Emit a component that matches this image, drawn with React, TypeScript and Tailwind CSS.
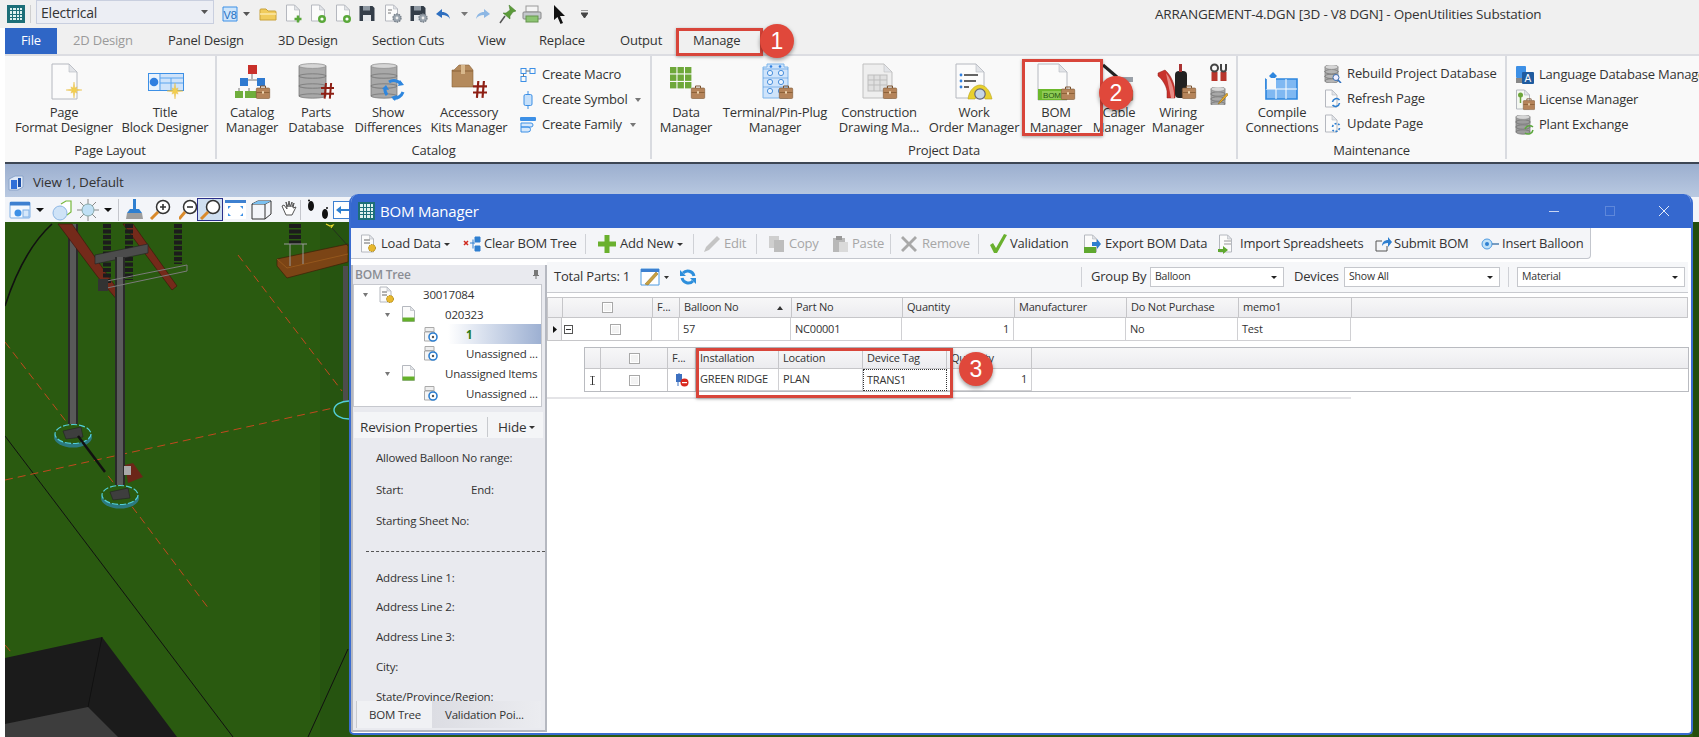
import React from "react";

const S = ({ w = 18, h = 18, vb, children, className = "" }: { w?: number; h?: number; vb?: string; children?: React.ReactNode; className?: string }) => (
  <svg width={w} height={h} viewBox={vb ?? `0 0 ${w} ${h}`} className={`shrink-0 block ${className}`}>{children}</svg>
);

const Case = ({ x, y, w = 14 }: { x: number; y: number; w?: number }) => (
  <g transform={`translate(${x} ${y}) scale(${w / 14})`}>
    <path d="M4.5 3V1h5v2" fill="none" stroke="#7a5230" strokeWidth="1" />
    <rect x="0.3" y="3" width="13.4" height="10.5" rx="1" fill="#b5845a" stroke="#7d5732" strokeWidth=".6" />
    <rect x="0.5" y="7" width="13" height="1" fill="#8d6239" />
    <rect x="6" y="6.2" width="2" height="2.4" fill="#ecd3ae" />
  </g>
);
const Star = ({ cx, cy, r = 8 }: { cx: number; cy: number; r?: number }) => {
  const pts: string[] = [];
  for (let i = 0; i < 16; i++) {
    const a = (i * Math.PI) / 8;
    const rr = i % 4 === 0 ? r : i % 2 === 0 ? r * 0.55 : r * 0.28;
    pts.push(`${cx + rr * Math.cos(a)},${cy + rr * Math.sin(a)}`);
  }
  return <polygon points={pts.join(" ")} fill="#f3cf4e" stroke="#e6b93a" strokeWidth=".4" />;
};
const DocP = ({ x, y, w, h, f = 8, fill = "#fbfbfb", stroke = "#b5b8bf" }: { x: number; y: number; w: number; h: number; f?: number; fill?: string; stroke?: string }) => (
  <g>
    <path d={`M${x} ${y}h${w - f}l${f} ${f}V${y + h}H${x}z`} fill={fill} stroke={stroke} />
    <path d={`M${x + w - f} ${y}v${f}h${f}z`} fill="#e2e4e8" stroke={stroke} strokeWidth=".6" />
  </g>
);
const Hash = ({ x, y, s = 14, c = "#8e1f14" }: { x: number; y: number; s?: number; c?: string }) => (
  <g stroke={c} strokeWidth={s / 6.5} fill="none">
    <path d={`M${x + s * 0.38} ${y}L${x + s * 0.28} ${y + s * 1.2}M${x + s * 0.78} ${y}L${x + s * 0.68} ${y + s * 1.2}M${x} ${y + s * 0.38}H${x + s}M${x} ${y + s * 0.82}H${x + s}`} />
  </g>
);
const Db = ({ x, y, w, h, fill = "#a8a8a8" }: { x: number; y: number; w: number; h: number; fill?: string }) => {
  const sh = h / 3;
  return (
    <g>
      {[2, 1, 0].map((i) => (
        <g key={i}>
          <rect x={x} y={y + i * sh + 2} width={w} height={sh} fill={fill} stroke="#6f6f6f" strokeWidth=".7" />
          <ellipse cx={x + w / 2} cy={y + i * sh + sh + 2} rx={w / 2} ry={2.2} fill={fill} stroke="#6f6f6f" strokeWidth=".7" />
          <ellipse cx={x + w / 2} cy={y + i * sh + 2} rx={w / 2} ry={2.4} fill="#d6d6d6" stroke="#8a8a8a" strokeWidth=".7" />
        </g>
      ))}
    </g>
  );
};
const Big = ({ children }: { children: React.ReactNode }) => <S w={44} h={40}>{children}</S>;

const IPage = () => <Big><DocP x={10} y={1} w={25} h={35} /><Star cx={32} cy={27} /></Big>;
const ITitle = () => (
  <Big>
    <rect x="5.5" y="10.5" width="35" height="17" fill="#cfe3fa" stroke="#3d90e6" />
    <rect x="6" y="11" width="10" height="16" fill="#eaf3fd" />
    <circle cx="11" cy="19" r="4.3" fill="#2f7fe0" />
    <path d="M17 11v16M17 15h23M17 20h23M28 15v12" stroke="#5aa4ee" fill="none" />
    <Star cx={32} cy={28} />
  </Big>
);
const ICatalog = () => (
  <Big>
    <path d="M22 11v5M14 19v-2h17v2M9 25v3M19 25v3" stroke="#777" fill="none" />
    <rect x="18" y="2" width="9" height="9" fill="#c9302a" />
    <rect x="10" y="15" width="8" height="8" fill="#2f7ad0" />
    <rect x="27" y="15" width="8" height="8" fill="#2f7ad0" />
    <rect x="5" y="28" width="8" height="7" fill="#6fae3c" />
    <rect x="15" y="28" width="8" height="7" fill="#6fae3c" />
    <rect x="23" y="28" width="4" height="7" fill="#6fae3c" />
    <Case x={26} y={22} />
  </Big>
);
const IParts = () => <Big><Db x={5} y={1} w={27} h={30} /><Hash x={27} y={20} s={13} /></Big>;
const IDiff = () => (
  <Big>
    <Db x={5} y={1} w={26} h={30} />
    <path d="M23 19a9 9 0 0 1 12 2M37 29a9 9 0 0 1-10 6M21 32a9 9 0 0 1-2-7" stroke="#2e86de" strokeWidth="3" fill="none" />
    <path d="M34 17l4 5-6 1zM29 38l-4-4 6-2zM16 26l4-4 3 5z" fill="#2e86de" />
  </Big>
);
const IAccessory = () => (
  <Big>
    <path d="M7 7l5-5h10l4 5v17H5V7z" fill="#b48a5c" stroke="#8a6238" strokeWidth=".6" />
    <path d="M5 8h21" stroke="#8a6238" />
    <rect x="14" y="2" width="4" height="9" fill="#d8b88c" />
    <Hash x={26} y={18} s={14} />
  </Big>
);
const IData = () => (
  <Big>
    {[0, 1, 2].map((r) => [0, 1, 2].map((c) => <rect key={`${r}${c}`} x={6 + c * 7.5} y={4 + r * 7.5} width={6.4} height={6.4} fill="#6ea83a" />))}
    <Case x={27} y={22} />
  </Big>
);
const ITerminal = () => (
  <Big>
    <path d="M10 4h4V1h17v3h4v31H10z" fill="#cfe4fb" stroke="#7db4ea" />
    <circle cx="18" cy="3.5" r="1.3" fill="#2f7fe0" /><circle cx="27" cy="3.5" r="1.3" fill="#2f7fe0" />
    {[10, 19, 28].map((y) => (
      <g key={y} stroke="#4a90dc" fill="#eaf3fd"><path d={`M10 ${y - 4}H35`} strokeWidth=".6" /><circle cx="17" cy={y} r="2.6" /><circle cx="28" cy={y} r="2.6" /></g>
    ))}
    <Case x={26} y={22} />
  </Big>
);
const IConstruction = () => (
  <Big>
    <DocP x={6} y={1} w={29} h={34} fill="#eeeeee" stroke="#bfbfbf" />
    <rect x="11" y="12" width="19" height="16" fill="#e0e0e0" stroke="#bdbdbd" />
    <path d="M11 17h19M11 22h19M17 12v16M23 12v16" stroke="#bdbdbd" />
    <Case x={26} y={22} />
  </Big>
);
const IWork = () => (
  <Big>
    <DocP x={4} y={1} w={28} h={34} />
    <g fill="#2f7fe0"><circle cx="9" cy="12" r="1.4" /><circle cx="9" cy="18" r="1.4" /><circle cx="9" cy="24" r="1.4" /></g>
    <path d="M12 12h14M12 18h12M12 24h5" stroke="#333" strokeWidth="1.4" />
    <path d="M16 36c1-9 7-14 12-14s10 5 12 14h-7c-1-3-3-5-5-5s-4 2-5 5z" fill="#e8d02e" stroke="#b8a41c" strokeWidth=".6" />
    <circle cx="28" cy="31" r="5.2" fill="#c6d6e6" stroke="#667" strokeWidth="1.2" />
  </Big>
);
const IBom = () => (
  <Big>
    <DocP x={4} y={1} w={29} h={36} />
    <rect x="4" y="26" width="29" height="11" fill="#6cb82c" />
    <rect x="8" y="28" width="20" height="8" fill="#8ecb55" />
    <text x="9" y="35" fontSize="8" fill="#27560f" fontFamily="Liberation Sans, sans-serif">BOM</text>
    <Case x={27} y={23} />
  </Big>
);
const ICable = () => (
  <Big>
    <path d="M6 2l14 12" stroke="#222" strokeWidth="3" />
    <rect x="18" y="14" width="18" height="5" fill="#9aa0a8" />
    <Case x={22} y={24} />
  </Big>
);
const IWiring = () => (
  <Big>
    <path d="M2 10l7-3c5 4 9 12 10 20v8h-8V28C10 22 6 16 2 13z" fill="#c8322c" stroke="#8f1f1a" strokeWidth=".5" />
    <path d="M10 10c4 5 7 12 8 20v5h-3" fill="#e88a84" />
    <rect x="19" y="8" width="12" height="27" rx="4" fill="#222" />
    <rect x="23" y="1" width="3" height="8" fill="#a33" />
    <Case x={26} y={22} />
  </Big>
);
const ICompile = () => (
  <Big>
    <polygon points="13,9 17,13 13,17 9,13" fill="#2e86de" />
    <path d="M6 16h31v20H6z" fill="#7fb8f2" stroke="#2e86de" strokeWidth="1.6" />
    <path d="M16 26v10M26 16v20M6 26h31" stroke="#fff" strokeWidth="1" />
    <rect x="6" y="15" width="10" height="11" fill="#f9f9f9" />
    <path d="M6 26V16" stroke="#2e86de" strokeWidth="1.6" />
  </Big>
);

/* small ribbon icons */
const IMacro = () => (
  <S w={18} h={18}><rect x="2" y="2.5" width="5" height="5" fill="none" stroke="#3d90e6" /><rect x="11" y="2.5" width="5" height="5" fill="none" stroke="#3d90e6" /><rect x="2" y="10.5" width="5" height="5" fill="none" stroke="#3d90e6" /><path d="M7 5h4M4.5 8v2.5" stroke="#777" /></S>
);
const ISymbol = () => (
  <S w={18} h={18}><rect x="5" y="3.5" width="8" height="11" rx="1.5" fill="#c6e0fa" stroke="#3d90e6" /><path d="M9 0v3.5M9 14.5V18" stroke="#3d90e6" /></S>
);
const IFamily = () => (
  <S w={18} h={18}><rect x="1" y="1" width="16" height="4" rx="1" fill="#3d90e6" /><path d="M2 7h10a2 2 0 0 1 0 4H2M2 11h7a2 2 0 0 1 0 5H2M2 7v9" fill="#d6e8fb" stroke="#3d90e6" /></S>
);
const IRebuild = () => (
  <S w={18} h={18}><Db x={1} y={0} w={13} h={14} fill="#b5b5b5" /><circle cx="12" cy="12.5" r="3" fill="#eef" stroke="#3d6fb0" /><path d="M14 15l3 3" stroke="#2e6fc0" strokeWidth="1.6" /></S>
);
const IRefresh = ({ dashed = false }: { dashed?: boolean }) => (
  <S w={18} h={20} vb="0 0 18 20"><DocP x={1.5} y={1} w={11.5} h={17} f={5} />
    <path d="M8.5 13a4 4 0 0 1 7-2M15.5 14a4 4 0 0 1-7 2" stroke="#2e7fd0" strokeWidth="1.6" fill="none" strokeDasharray={dashed ? "2 1.5" : undefined} /></S>
);
const ILang = () => (
  <S w={20} h={20}><rect x="1" y="1" width="10" height="12" rx="1" fill="#3d90e6" /><rect x="7" y="7" width="12" height="12" rx="1" fill="#1f5b9f" /><text x="9.5" y="17" fontSize="10" fill="#fff" fontFamily="Liberation Sans, sans-serif">A</text><rect x="1" y="13" width="6" height="5" fill="#888" /></S>
);
const ILicense = () => (
  <S w={20} h={22} vb="0 0 20 22"><DocP x={1.5} y={1} w={13} h={19} f={5} fill="#f4f7f2" /><circle cx="5.5" cy="6" r="2.5" fill="#6da53a" /><path d="M5.5 8v6" stroke="#6da53a" strokeWidth="1.5" /><Case x={8} y={9} w={12} /></S>
);
const IPlant = () => (
  <S w={20} h={20}><Db x={1} y={0} w={14} h={15} fill="#9d9d9d" /><path d="M10 14a5 5 0 0 1 8-2M18 15a5 5 0 0 1-8 3" stroke="#5aa83a" strokeWidth="1.5" fill="none" /></S>
);

/* qat */
const Tri = ({ c = "#444", w = 7, h = 4 }: { c?: string; w?: number; h?: number }) => <S w={w} h={h}><path d={`M0 0H${w}L${w / 2} ${h}z`} fill={c} /></S>;
const QDocPlus = ({ c, plain }: { c: string; plain?: boolean }) => (
  <S w={18} h={20} vb="0 0 18 20"><DocP x={1.5} y={1} w={13} h={16} f={5} />
    {plain ? <path d="M9.5 15h7M13 11.5v7" stroke={c} strokeWidth="2.5" /> : <g><circle cx="12" cy="15" r="4" fill={c} /><circle cx="12" cy="15" r="1.6" fill="#fff" /></g>}
  </S>
);
const QSave = ({ gear, paper }: { gear?: boolean; paper?: boolean }) => (
  <S w={20} h={20}>
    {paper ? <DocP x={2.5} y={1} w={12} h={16} f={4} /> : <g><path d="M1.5 2h13l2 2v13h-15z" fill="#333d48" /><rect x="5" y="2" width="7" height="4.5" fill="#8f99a3" /><rect x="5" y="11" width="8" height="6" fill="#e4e7ea" /></g>}
    {gear && <g><circle cx="14" cy="14" r="4" fill="#9aa4ae" stroke="#767f88" strokeDasharray="1.5 1" strokeWidth="1.4" /><circle cx="14" cy="14" r="1.4" fill="#eee" /></g>}
    {paper && <path d="M5 6h4M5 9h3" stroke="#777" />}
  </S>
);
const QAT = [
  [16, <S w={16} h={16}><path d="M1 1h14v14H1z" fill="#cfe6fb" stroke="#3d90e6" /><text x="1.5" y="13" fontSize="11" fill="#1f6fc0" fontFamily="Liberation Sans, sans-serif">V8</text></S>],
  [16, <Tri c="#555" />],
  [28, <S w={18} h={14}><path d="M1 3a1 1 0 0 1 1-1h5l2 2h7a1 1 0 0 1 1 1v8H1z" fill="#f1cc5c" stroke="#c9a23a" /><path d="M1 7h16" stroke="#fbe8a8" strokeWidth="1.5" /></S>],
  [23, <QDocPlus c="#5aa83a" plain />],
  [28, <QDocPlus c="#5aa83a" />],
  [22, <QDocPlus c="#5aa83a" />],
  [25, <QSave />],
  [26, <QSave gear paper />],
  [25, <QSave gear />],
  [24, <S w={14} h={12}><path d="M0 6l6-5v3c4 0 7 2 8 7-2-3-4-4-8-4v3z" fill="#2e6fc0" /></S>],
  [18, <Tri c="#777" />],
  [20, <S w={14} h={12}><path d="M14 6L8 1v3C4 4 1 6 0 11c2-3 4-4 8-4v3z" fill="#8db7e4" /></S>],
  [29, <S w={18} h={20} vb="0 0 18 20"><path d="M10 1l7 6-3 1-3 4 0 3-7-6 3 0 4-3z" fill="#5c9b3a" stroke="#3f7a26" strokeWidth=".5" /><path d="M6 12l-5 7" stroke="#555" strokeWidth="1.5" /></S>],
  [20, <S w={20} h={18}><rect x="4" y="1" width="12" height="6" fill="#f5f5f5" stroke="#999" /><rect x="1" y="7" width="18" height="7" rx="1" fill="#c4c8cc" stroke="#888" /><rect x="4" y="11" width="12" height="6" fill="#8cc472" stroke="#66944f" /></S>],
  [34, <S w={14} h={20} vb="0 0 14 20"><path d="M2 1l11 11H8l3 7-2.5 1-3-7L2 16z" fill="#111" /></S>],
  [16, <S w={7} h={9}><path d="M0 0h7M0 3h7L3.5 8z" stroke="#444" fill="#444" /></S>],
] as const;

const tabs: [string, string, string?][] = [
  ["2D Design", "ml-[16px] w-[95px]", "text-[#9a9a9a]"],
  ["Panel Design", "w-[110px]"],
  ["3D Design", "w-[94px]"],
  ["Section Cuts", "w-[106px]"],
  ["View", "w-[61px]"],
  ["Replace", "w-[81px]"],
  ["Output", "w-[73px]"],
  ["Manage", ""],
];

const Btn = ({ w, icon, l1, l2 }: { w: number; icon: React.ReactNode; l1: string; l2: string }) => (
  <div className="flex flex-col items-center shrink-0" style={{ width: w }}>
    <div className="h-[40px] flex justify-center">{icon}</div>
    <div className="mt-[2px] text-center leading-[14.5px] whitespace-nowrap flex flex-col items-center">
      <span>{l1}</span>
      <span>{l2}</span>
    </div>
  </div>
);
const LI = ({ icon, t, arrow }: { icon: React.ReactNode; t: string; arrow?: boolean }) => (
  <div className="h-[25px] flex items-center gap-[4px] whitespace-nowrap">
    <div className="w-[20px] flex justify-center shrink-0">{icon}</div>
    <span>{t}</span>
    {arrow && <span className="ml-[4px]"><Tri c="#777" w={6} h={4} /></span>}
  </div>
);
const Group = ({ w, label, children, last }: { w: number; label?: string; children: React.ReactNode; last?: boolean }) => (
  <div className={`shrink-0 flex flex-col h-[103px] ${last ? "" : "border-r-2 border-[#d9dbe0]"}`} style={{ width: w }}>
    <div className="flex h-[88px] pt-[7px]">{children}</div>
    {label && <div className="h-[16px] flex items-center justify-center">{label}</div>}
  </div>
);

/* small toolbar icons in BOM window */
const TDoc = ({ kind }: { kind: string }) => (
  <S w={18} h={20} vb="0 0 18 20">
    <DocP x={1.5} y={1} w={12} h={17} f={4} />
    {kind === "load" && <g><path d="M4 6h6M4 9h6" stroke="#666" /><circle cx="12" cy="14" r="3.5" fill="#e8b82e" stroke="#a88414" strokeDasharray="1.5 1" /></g>}
    {kind === "export" && <g><rect x="1" y="13" width="12" height="6" fill="#5fa82f" /><path d="M9 8h5V5l4 5-4 5v-3H9z" fill="#2e7fd0" /></g>}
    {kind === "import" && <g><path d="M6 7h7M6 10h7" stroke="#999" /><path d="M0 15h5v-3l5 4-5 4v-2H0z" fill="#5fa82f" /></g>}
  </S>
);
const TI = ({ w, ml = 0, icon, t, dis, arrow, gap = 3 }: { w: number; ml?: number; icon: React.ReactNode; t: string; dis?: boolean; arrow?: boolean; gap?: number }) => (
  <div className={`flex items-center shrink-0 whitespace-nowrap ${dis ? "text-[#a6a6a6]" : ""}`} style={{ width: w, marginLeft: ml, gap }}>
    {icon}
    <span>{t}</span>
    {arrow && <span><Tri c="#333" w={6} h={3} /></span>}
  </div>
);
const Sep = () => <div className="w-px h-[20px] bg-[#cfd1d6] shrink-0" />;

const Check = () => <div className="w-[11px] h-[11px] border border-[#a8a8a8] bg-[#f3f3f3] shadow-[inset_0_0_0_1px_#fff]" />;

const HC = ({ w, t, right, sort, center }: { w?: number; t?: React.ReactNode; right?: boolean; sort?: boolean; center?: boolean }) => (
  <div className={`h-full flex items-center px-[4px] border-r border-[#c6c6c9] shrink-0 whitespace-nowrap overflow-hidden ${center ? "justify-center" : right ? "justify-end" : ""} ${w ? "" : "flex-1 border-r-0"}`} style={w ? { width: w } : undefined}>
    {t}
    {sort && <span className="ml-auto mr-[4px]"><svg width="6" height="4"><path d="M0 4L3 0l3 4z" fill="#333" /></svg></span>}
  </div>
);
const Combo = ({ w, t }: { w: number; t: string }) => (
  <div className="h-[20px] border border-[#c5c7cc] bg-white flex items-center justify-between px-[4px] text-[10.5px] shrink-0" style={{ width: w }}>
    <span>{t}</span><span className="mr-[2px]"><Tri c="#222" w={6} h={3} /></span>
  </div>
);
const TreeRow = ({ indent, icon, text, arrow, sel, gap, green }: { indent: number; icon: React.ReactNode; text: string; arrow?: boolean; sel?: boolean; gap: number; green?: boolean }) => (
  <div className="h-[19.7px] flex items-center relative whitespace-nowrap" style={{ paddingLeft: indent }}>
    {sel && <div className="absolute left-[94px] right-0 top-0 bottom-0 bg-gradient-to-r from-white to-[#9db0d2]" />}
    <div className="w-[15px] flex justify-start shrink-0">{arrow && <Tri c="#777" w={5} h={4} />}</div>
    <div className="w-[17px] flex justify-center shrink-0">{icon}</div>
    <span style={{ marginLeft: gap }} className={`relative ${green ? "text-[#2c7a18] font-bold" : ""}`}>{text}</span>
  </div>
);
const TIcDoc = () => <S w={15} h={17} vb="0 0 15 17"><DocP x={1.5} y={.5} w={12} h={15} f={4} /><path d="M1.5 11.5h12v4h-12z" fill="#64b02a" /></S>;
const TIcGear = () => <S w={16} h={17} vb="0 0 16 17"><path d="M2 1.5h9v4H2z" fill="#eee" stroke="#aaa" /><path d="M1.5 6h10v9h-10z" fill="#f5f5f5" stroke="#aaa" /><circle cx="10" cy="11" r="4" fill="#fff" stroke="#2e7fd0" strokeWidth="1.6" /><circle cx="10" cy="11" r="1.2" fill="#555" /></S>;
const TIcLoad = () => <S w={18} h={18}><DocP x={2} y={1} w={11} h={15} f={4} /><path d="M4 6h5M4 9h5" stroke="#666" /><circle cx="12" cy="13" r="3.5" fill="#e8b82e" stroke="#a88414" strokeDasharray="1.5 1" /></S>;

const Canvas = () => (
  <svg viewBox="5 222 1694 515" className="block w-full h-full" preserveAspectRatio="none">
    <rect x="5" y="222" width="1694" height="515" fill="#2a5a10" />
    <rect x="320" y="222" width="30" height="515" fill="#265410" />
    {/* dark pit */}
    <polygon points="5,658 102,637 177,737 5,737" fill="#1b1b1b" />
    <polygon points="5,724 88,707 118,737 5,737" fill="#3d3d3d" />
    <path d="M102 637L88 707" stroke="#111" strokeWidth="1" />
    {/* thin black lines */}
    <path d="M5 436L233 737M348 649L308 737" stroke="#111" strokeWidth="1" fill="none" />
    <path d="M5 306C16 272 30 244 52 224" stroke="#111" strokeWidth="1.6" fill="none" />
    {/* red dashed lines */}
    <g stroke="#c2491f" strokeWidth="1" strokeDasharray="8 5" fill="none">
      <path d="M5 342L65 420L140 517L209 609" />
      <path d="M5 480L347 405" />
      <path d="M238 255L342 391" />
      <path d="M5 645L11 652" />
    </g>
    {/* pole 1 */}
    <rect x="68" y="224" width="10" height="200" fill="#595959" />
    <rect x="68" y="224" width="2" height="200" fill="#2a2a2a" /><rect x="76" y="224" width="2" height="200" fill="#2a2a2a" />
    {/* beams */}
    <polygon points="58,224 72,224 120,293 118,301 97,276" fill="#742a1a" stroke="#3a120b" strokeWidth=".6" />
    <polygon points="123,224 133,224 177,286 172,290" fill="#742a1a" stroke="#3a120b" strokeWidth=".6" />
    {/* insulators */}
    <g stroke="#1c1c1c" strokeWidth="8" strokeDasharray="4 1.5" fill="none">
      <path d="M107 224V284" /><path d="M129 224V280" /><path d="M178 224V264" />
    </g>
    {/* cross arm */}
    <polygon points="95,255 148,244 148,253 95,264" fill="#4c4c4c" stroke="#222" strokeWidth=".6" />
    {/* pole 2 */}
    <rect x="115" y="257" width="10" height="228" fill="#5b5b5b" />
    <rect x="115" y="257" width="2" height="228" fill="#2a2a2a" /><rect x="123" y="257" width="2" height="228" fill="#2a2a2a" />
    {/* frame */}
    <path d="M102 282L187 265L187 271L102 289Z" stroke="#7b7b7b" strokeWidth="1" fill="none" />
    <path d="M98 279h10v12h-10z" fill="#333" />
    {/* rings */}
    {[[73, 434], [120, 495]].map(([cx, cy]) => (
      <g key={cx}>
        <ellipse cx={cx} cy={cy + 3} rx="19" ry="10.5" fill="#2c7a80" />
        <ellipse cx={cx} cy={cy} rx="18" ry="9.5" fill="#2a5a10" stroke="#53cfd8" strokeWidth="1.2" strokeDasharray="6 2" />
        <polygon points={`${cx - 10},${cy - 3} ${cx + 8},${cy - 7} ${cx + 10},${cy + 3} ${cx - 7},${cy + 5}`} fill="#3e3e3e" stroke="#222" strokeWidth=".6" />
      </g>
    ))}
    {/* plate near pole 2 */}
    <polygon points="125,465 133,463 143,477 128,483" fill="#6b2618" />
    <rect x="124" y="466" width="7" height="9" fill="#a9a9a9" />
    <path d="M78 436L105 472" stroke="#111" strokeWidth="2.5" />
    {/* right beam */}
    <polygon points="277,259 348,244 348,262 287,278 277,266" fill="#7b4415" stroke="#3c1f08" strokeWidth=".7" />
    <path d="M277 259L287 268L348 254" stroke="#a0601f" fill="none" strokeWidth=".7" />
    <path d="M295 224V246" stroke="#1c1c1c" strokeWidth="12" strokeDasharray="4 1.5" />
    <path d="M284 244h23M290 244v22M303 244v20" stroke="#9a9a9a" strokeWidth="1" fill="none" />
    <path d="M326 224l4 2 3-1-2 3" stroke="#e8d92e" strokeWidth="1.2" fill="none" />
    <path d="M332 228L348 246" stroke="#222" strokeWidth=".7" />
    {/* pole 3 */}
    <rect x="343" y="266" width="5" height="142" fill="#4d4d4d" />
    <ellipse cx="349" cy="410" rx="15" ry="9" fill="#2a5a10" stroke="#53cfd8" strokeWidth="1.4" />
    {/* green right strip */}
    <rect x="1693" y="222" width="6" height="515" fill="#234e0d" />
  </svg>
);

export default function App() {
  const mainCols = [15, 90, 27, 112, 111, 112, 112, 112, 113];
  return (
    <div className="w-[1699px] h-[737px] relative overflow-hidden bg-white text-[13px] text-[#333] tracking-[-0.2px] font-['Open_Sans',sans-serif] flex flex-col">
      {/* Quick access row */}
      <div className="h-[28px] shrink-0 bg-[#f0f0f0] flex items-center">
        <div className="ml-[7px] w-[18px] h-[18px] bg-[#1d6f78] grid grid-cols-4 gap-px p-[3px] shrink-0">
          {Array.from({ length: 16 }).map((_, i) => <div key={i} className="bg-[#dff2f0]" />)}
        </div>
        <div className="ml-[5px] w-px h-[18px] bg-[#cfcfcf]" />
        <div className="ml-[5px] w-[178px] h-[24px] self-start bg-[#eceef4] border border-[#c9cfdf] flex items-center justify-between pl-[4px] pr-[5px] text-[14px] shrink-0">
          <span>Electrical</span><Tri c="#555" />
        </div>
        <div className="ml-[8px] flex items-center">
          {QAT.map(([w, el], i) => <div key={i} className="flex justify-center items-center shrink-0" style={{ width: w as number }}>{el}</div>)}
        </div>
        <div className="ml-[563px] whitespace-nowrap text-[13.5px]">ARRANGEMENT-4.DGN [3D - V8 DGN] - OpenUtilities Substation</div>
      </div>

      <div className="flex-1 pl-[5px] flex flex-col min-h-0">
        {/* Tabs */}
        <div className="h-[28px] shrink-0 flex items-stretch bg-[#f0f0f0] border-b-2 border-[#dcdde2]">
          <div className="w-[52px] bg-[#2f66c6] text-white flex items-center justify-center">File</div>
          {tabs.map(([t, c, k]) => <div key={t} className={`flex items-center shrink-0 ${c} ${k ?? ""}`}>{t}</div>)}
        </div>

        {/* Ribbon */}
        <div className="h-[108px] shrink-0 bg-[#f9f9f9] flex border-b-2 border-[#3d4654]">
          <Group w={212} label="Page Layout">
            <Btn w={118} icon={<IPage />} l1="Page" l2="Format Designer" />
            <Btn w={84} icon={<ITitle />} l1="Title" l2="Block Designer" />
          </Group>
          <Group w={435} label="Catalog">
            <Btn w={70} icon={<ICatalog />} l1="Catalog" l2="Manager" />
            <Btn w={58} icon={<IParts />} l1="Parts" l2="Database" />
            <Btn w={86} icon={<IDiff />} l1="Show" l2="Differences" />
            <Btn w={76} icon={<IAccessory />} l1="Accessory" l2="Kits Manager" />
            <div className="ml-[11px] -mt-[1px]">
              <LI icon={<IMacro />} t="Create Macro" />
              <LI icon={<ISymbol />} t="Create Symbol" arrow />
              <LI icon={<IFamily />} t="Create Family" arrow />
            </div>
          </Group>
          <Group w={586} label="Project Data">
            <Btn w={68} icon={<IData />} l1="Data" l2="Manager" />
            <Btn w={110} icon={<ITerminal />} l1="Terminal/Pin-Plug" l2="Manager" />
            <Btn w={98} icon={<IConstruction />} l1="Construction" l2="Drawing Ma..." />
            <Btn w={92} icon={<IWork />} l1="Work" l2="Order Manager" />
            <Btn w={72} icon={<IBom />} l1="BOM" l2="Manager" />
            <Btn w={54} icon={<ICable />} l1="Cable" l2="Manager" />
            <Btn w={64} icon={<IWiring />} l1="Wiring" l2="Manager" />
            <div className="flex flex-col gap-[6px]">
              <S w={18} h={18}><rect x="1.5" y="9" width="6" height="9" fill="#b8352c" /><rect x="10.5" y="9" width="6" height="9" fill="#b8352c" /><circle cx="4.5" cy="5" r="3.5" fill="none" stroke="#444" strokeWidth="2" /><path d="M11 1v5a2.5 2.5 0 0 0 5 0V1" fill="none" stroke="#444" strokeWidth="2" /></S>
              <S w={18} h={18}><Db x={1} y={0} w={14} h={15} fill="#a8a8a8" /><path d="M8 17l2-3 7-8 1 2-8 8z" fill="#e8a828" stroke="#8a6a18" strokeWidth=".5" /></S>
            </div>
          </Group>
          <Group w={269} label="Maintenance">
            <Btn w={88} icon={<ICompile />} l1="Compile" l2="Connections" />
            <div className="-mt-[2px] -ml-[3px] tracking-[-0.1px]">
              <LI icon={<IRebuild />} t="Rebuild Project Database" />
              <LI icon={<IRefresh />} t="Refresh Page" />
              <LI icon={<IRefresh dashed />} t="Update Page" />
            </div>
          </Group>
          <Group w={192} last>
            <div className="ml-[8px] -mt-[1px]">
              <LI icon={<ILang />} t="Language Database Manager" />
              <LI icon={<ILicense />} t="License Manager" />
              <LI icon={<IPlant />} t="Plant Exchange" />
            </div>
          </Group>
        </div>

        {/* View title */}
        <div className="h-[33px] shrink-0 bg-gradient-to-b from-[#9cafcf] to-[#b9c9e1] flex items-center gap-[8px] pl-[2px] pt-[4px] text-[13.5px]">
          <S w={18} h={18}><path d="M2 5l6-3h8v11l-5 3H2z" fill="#dfe9f7" stroke="#8ba4c9" /><rect x="4" y="6" width="6" height="9" fill="#2f6fd8" /><rect x="11" y="4" width="3" height="9" fill="#1c4fa8" /></S>
          <span>View 1, Default</span>
        </div>
        {/* View toolbar */}
        <div className="h-[25px] shrink-0 bg-[#f3f5f9] flex items-center">
          <div className="ml-[4px] flex items-center">
            <S w={22} h={20}><rect x="1" y="2" width="20" height="16" rx="1" fill="#f3f8fe" stroke="#7fb0e6" /><rect x="1" y="2" width="20" height="3.5" fill="#3d80d0" /><circle cx="9" cy="13" r="3.5" fill="#3d90e6" /><rect x="14" y="10" width="6" height="7" fill="#d6e8fb" stroke="#7fb0e6" /></S>
            <span className="ml-[5px]"><Tri c="#111" w={8} h={4} /></span>
            <span className="ml-[8px]"><S w={21} h={22}><path d="M9 5l5-3h5v11l-4 3" fill="#fff" stroke="#76b83c" strokeWidth="1.2" /><circle cx="8" cy="14" r="7" fill="#cfe3f7" stroke="#8db7e4" /></S></span>
            <span className="ml-[4px]"><S w={22} h={22}><g stroke="#888"><path d="M11 0v22M0 11h22M3 3l16 16M19 3L3 19" /></g><circle cx="11" cy="11" r="6" fill="#bfe0f5" stroke="#8aa" /></S></span>
            <span className="ml-[5px]"><Tri c="#111" w={8} h={4} /></span>
            <div className="ml-[6px] w-px h-[22px] bg-[#c4c6cc]" />
            <span className="ml-[7px]"><S w={17} h={21}><rect x="7" y="0" width="3" height="10" fill="#2e7fd0" /><path d="M4 10h9l3 4H1z" fill="#2e7fd0" /><path d="M1 14h15l1 6H0z" fill="#9d9d9d" /></S></span>
            <span className="ml-[6px]"><S w={22} h={22}><circle cx="14" cy="8" r="6.5" fill="#fff" stroke="#333" strokeWidth="1.5" /><path d="M11 8h6M14 5v6" stroke="#333" strokeWidth="1.6" /><path d="M9 13L2 20" stroke="#d98a2b" strokeWidth="3" /></S></span>
            <span className="ml-[8px]"><S w={18} h={22}><circle cx="11" cy="8" r="6.5" fill="#fff" stroke="#333" strokeWidth="1.5" /><path d="M8 8h6" stroke="#333" strokeWidth="1.6" /><path d="M6 13L0 20" stroke="#d98a2b" strokeWidth="3" /></S></span>
            <div className="w-[26px] h-[23px] bg-[#cfdff0] border border-[#2b2f8a] flex items-center justify-center">
              <S w={22} h={21}><circle cx="14" cy="8" r="6.5" fill="#fff" stroke="#333" strokeWidth="1.5" /><path d="M9 13L2 20" stroke="#d98a2b" strokeWidth="3" /></S>
            </div>
            <span className="ml-[2px]"><S w={21} h={19}><rect x="0" y="0" width="21" height="19" fill="#fff" /><rect x="0" y="0" width="21" height="3" fill="#3d80d0" /><g fill="#3d90e6"><path d="M3 6l3 0-3 3zM18 6l-3 0 3 3zM3 16l3 0-3-3zM18 16l-3 0 3-3z" /></g></S></span>
            <span className="ml-[4px]"><S w={22} h={22}><path d="M2 5l6-3h13v13l-6 5H2z" fill="none" stroke="#333" /><path d="M2 5h13v15M15 5l6-3" stroke="#333" fill="none" /><path d="M2 5l6-3h13l-6 3z" fill="#7ac0f0" /></S></span>
            <span className="ml-[5px]"><S w={20} h={22}><path d="M5 7l4 9h6l4-8-3 1 1-5-2 4V3l-2 5-1-6-1 6-2-5 1 7-3-4z" fill="#fff" stroke="#555" /></S></span>
            <div className="ml-[3px] w-px h-[20px] bg-[#c4c6cc]" />
            <span className="ml-[5px]"><S w={25} h={22}><ellipse cx="5" cy="7" rx="3" ry="5" fill="#111" /><circle cx="3" cy="1.5" r="1" fill="#111" /><ellipse cx="19" cy="15" rx="3" ry="5" fill="#111" /><circle cx="21" cy="9" r="1" fill="#111" /></S></span>
            <span className="ml-[2px]"><S w={19} h={18}><rect x=".5" y=".5" width="18" height="17" fill="#fff" stroke="#3d80d0" /><path d="M3 9l5-4v3h8v2H8v3z" fill="#2e7fd0" /></S></span>
          </div>
        </div>
        {/* Model canvas */}
        <div className="flex-1 min-h-0"><Canvas /></div>
      </div>

      {/* BOM Manager floating window */}
      <div className="absolute left-[349px] top-[194px] w-[1344px] h-[541px] bg-white rounded-t-[9px] rounded-b-[5px] border-x-2 border-b-2 border-[#3a6cd0] flex flex-col overflow-hidden text-[#333]">
        <div className="h-[34px] shrink-0 bg-[#3568cf] flex items-center pl-[7px] text-white text-[15px]">
          <div className="w-[17px] h-[18px] bg-[#1d6f78] grid grid-cols-4 gap-px p-[2px] shrink-0">
            {Array.from({ length: 16 }).map((_, i) => <div key={i} className="bg-[#dff2f0]" />)}
          </div>
          <span className="ml-[5px]">BOM Manager</span>
          <div className="ml-auto flex items-center">
            <div className="w-[10px] h-px bg-[#c9d6f2]" />
            <div className="ml-[46px] w-[10px] h-[10px] border border-[#5e87da]" />
            <svg className="ml-[43px] mr-[21px]" width="12" height="12"><path d="M1 1l10 10M11 1L1 11" stroke="#e4ebf9" strokeWidth="1" /></svg>
          </div>
        </div>
        {/* toolbar */}
        <div className="h-[32px] shrink-0 bg-white flex">
          <div className="w-[1240px] h-[31px] bg-[#f4f5f8] border-b border-r border-[#c3c6cd] rounded-br-[4px] flex items-center pl-[9px] pt-[2px]">
            <TI w={103} icon={<TDoc kind="load" />} t="Load Data" arrow />
            <TI w={122} icon={<S w={18} h={18}><path d="M1 6l4 4M5 6l-4 4" stroke="#d02a1e" strokeWidth="1.5" /><path d="M12 2h5v5h-5zM12 11h5v5h-5zM7 8h5M10 4.5v9" fill="#2e7fd0" stroke="#2e7fd0" /></S>} t="Clear BOM Tree" />
            <Sep />
            <TI ml={12} w={95} gap={4} icon={<S w={18} h={18}><path d="M6.5 0h5v6.5H18v5h-6.5V18h-5v-6.5H0v-5h6.5z" fill="#6ab02e" /></S>} t="Add New" arrow />
            <Sep />
            <TI ml={9} w={53} dis icon={<S w={18} h={18}><path d="M1 17l2-5L14 1l3 3L6 15z" fill="#c4c4c4" /></S>} t="Edit" />
            <Sep />
            <TI ml={11} w={63} dis icon={<S w={18} h={18}><rect x="1" y="1" width="10" height="12" fill="#cfcfcf" /><rect x="6" y="5" width="10" height="12" fill="#bdbdbd" /></S>} t="Copy" />
            <TI w={59} dis icon={<S w={18} h={18}><rect x="2" y="3" width="12" height="14" fill="#b8b8b8" /><rect x="5" y="1" width="6" height="4" fill="#999" /><rect x="8" y="7" width="9" height="10" fill="#dadada" /></S>} t="Paste" />
            <Sep />
            <TI ml={10} w={77} dis gap={5} icon={<S w={16} h={16}><path d="M2 0l6 6 6-6 2 2-6 6 6 6-2 2-6-6-6 6-2-2 6-6-6-6z" fill="#a8a8a8" /></S>} t="Remove" />
            <Sep />
            <TI ml={10} w={94} icon={<S w={18} h={20} vb="0 0 18 20"><path d="M1 11l3-2 3 5L15 0l3 1-10 18H5z" fill="#6ab02e" /></S>} t="Validation" />
            <TI w={135} gap={4} icon={<TDoc kind="export" />} t="Export BOM Data" />
            <TI w={156} gap={4} icon={<TDoc kind="import" />} t="Import Spreadsheets" />
            <TI w={107} gap={2} icon={<S w={18} h={18}><path d="M2 6h6M2 6v10h11v-5" fill="none" stroke="#555" /><path d="M8 11c0-4 3-6 6-6V2l4 5-4 5V8c-3 0-5 1-6 3z" fill="#2e7fd0" /></S>} t="Submit BOM" />
            <TI w={103} gap={2} icon={<S w={19} h={18}><circle cx="6" cy="9" r="5" fill="#bfe0f7" stroke="#4e9be0" /><circle cx="6" cy="9" r="2" fill="#2e7fd0" /><path d="M11 9h7" stroke="#4e7fb0" strokeWidth="1.5" /></S>} t="Insert Balloon" />
          </div>
        </div>

        <div className="flex-1 flex min-h-0">
          {/* left panel */}
          <div className="w-[196px] mt-[5px] shrink-0 flex flex-col bg-[#e9eaef] border-x-2 border-b-2 border-[#b5b8c0] h-[467px] overflow-hidden">
            <div className="h-[19px] shrink-0 flex items-center justify-between px-[2px] pr-[6px] text-[12px] font-semibold text-[#8a8d94]">
              <span>BOM Tree</span>
              <svg width="6" height="9"><path d="M1 0h4v5h1v1H3.5v3h-1V6H0V5h1z" fill="#777" /></svg>
            </div>
            <div className="h-[123px] shrink-0 mr-[3px] bg-white border border-[#c6c8ce] text-[11.5px]">
              <TreeRow indent={9} arrow icon={<TIcLoad />} gap={28} text="30017084" />
              <TreeRow indent={31} arrow icon={<TIcDoc />} gap={28} text="020323" />
              <TreeRow indent={53} icon={<TIcGear />} gap={27} text="1" sel green />
              <TreeRow indent={53} icon={<TIcGear />} gap={27} text="Unassigned ..." />
              <TreeRow indent={31} arrow icon={<TIcDoc />} gap={28} text="Unassigned Items" />
              <TreeRow indent={53} icon={<TIcGear />} gap={27} text="Unassigned ..." />
            </div>
            <div className="h-[26px] mt-[5px] pt-[4px] shrink-0 mr-[2px] bg-[#f4f5f7] flex items-center text-[13.5px] ml-[1px]">
              <span className="ml-[6px] w-[127px]">Revision Properties</span>
              <div className="w-px h-[20px] bg-[#c8cace]" />
              <span className="ml-[10px]">Hide</span>
              <span className="ml-[3px]"><Tri c="#333" w={6} h={3} /></span>
            </div>
            <div className="flex-1 min-h-0 overflow-hidden pl-[23px] text-[11.5px]">
              <div className="h-[40px] flex items-center">Allowed Balloon No range:</div>
              <div className="h-[24px] flex items-center"><span className="w-[95px]">Start:</span><span>End:</span></div>
              <div className="h-[38px] flex items-center">Starting Sheet No:</div>
              <div className="-ml-[10px] mt-[11px] border-t border-dashed border-[#555] h-0" />
              <div className="h-[30px] mt-[11px] flex items-center">Address Line 1:</div>
              <div className="h-[28px] flex items-center">Address Line 2:</div>
              <div className="h-[32px] flex items-center">Address Line 3:</div>
              <div className="h-[28px] flex items-center">City:</div>
              <div className="h-[32px] flex items-center">State/Province/Region:</div>
            </div>
            <div className="h-[27px] shrink-0 flex items-stretch text-[11.5px] mx-[3px] mb-[2px]">
              <div className="w-[76px] bg-[#f0f1f4] border-l border-[#c8cace] flex items-center pl-[12px]">BOM Tree</div>
              <div className="w-[109px] bg-gradient-to-r from-[#dcdde3] to-[#ebecf0] flex items-center pl-[13px]">Validation Poi...</div>
            </div>
          </div>

          {/* right pane */}
          <div className="flex-1 min-w-0 flex flex-col">
            <div className="h-[31px] mt-[2px] shrink-0 bg-[#f6f7f9] border-b border-[#c8cacf] flex items-center pl-[7px] mr-[3px]">
              <span className="w-[79px] shrink-0">Total Parts: 1</span>
              <span className="ml-[7px]"><S w={22} h={20}><path d="M1 2h18v16H1z" fill="#fff" stroke="#4e9be0" /><path d="M1 2h18v3H1z" fill="#3d80d0" /><path d="M5 17L16 5l2 2L8 18z" fill="#c9a040" stroke="#8a6a18" strokeWidth=".5" /></S></span>
              <span className="ml-[2px]"><Tri c="#333" w={5} h={3} /></span>
              <span className="ml-[10px]"><S w={18} h={18}><path d="M15 8a6.5 6.5 0 0 0-11-3M3 10a6.5 6.5 0 0 0 11 3" fill="none" stroke="#2e8fdc" strokeWidth="3" /><path d="M1 2v6h6zM17 16v-6h-6z" fill="#2e8fdc" /></S></span>
              <div className="ml-auto flex items-center">
                <Sep />
                <span className="ml-[9px] w-[59px]">Group By</span>
                <Combo w={134} t="Balloon" />
                <span className="ml-[10px] w-[50px]">Devices</span>
                <Combo w={156} t="Show All" />
                <div className="ml-[8px]"><Sep /></div>
                <div className="ml-[8px] mr-[3px]"><Combo w={168} t="Material" /></div>
              </div>
            </div>

            <div className="mt-[4px] mr-[3px] text-[11px]">
              {/* master header */}
              <div className="h-[21px] flex bg-gradient-to-b from-[#f7f7f8] to-[#ececef] border border-[#c6c6c9]">
                <HC w={mainCols[0]} />
                <HC w={mainCols[1]} center t={<Check />} />
                <HC w={mainCols[2]} t="F..." />
                <HC w={mainCols[3]} t="Balloon No" sort />
                <HC w={mainCols[4]} t="Part No" />
                <HC w={mainCols[5]} t="Quantity" />
                <HC w={mainCols[6]} t="Manufacturer" />
                <HC w={mainCols[7]} t="Do Not Purchase" />
                <HC w={mainCols[8]} t="memo1" />
                <HC />
              </div>
              {/* master row */}
              <div className="h-[23px] flex">
                <div className="w-[15px] shrink-0 bg-[#f2f2f4] border-x border-b border-[#c6c6c9] flex items-center justify-center"><svg width="4" height="7"><path d="M0 0l4 3.5L0 7z" fill="#111" /></svg></div>
                <div className="w-[90px] shrink-0 border-r border-b border-[#c6c6c9] flex items-center pl-[2px]">
                  <div className="w-[9px] h-[9px] border border-[#555] flex items-center justify-center"><div className="w-[5px] h-px bg-[#333]" /></div>
                  <div className="ml-[37px]"><Check /></div>
                </div>
                <HCell w={27} />
                <HCell w={112} t="57" />
                <HCell w={111} t="NC00001" />
                <HCell w={112} t="1" right />
                <HCell w={112} />
                <HCell w={112} t="No" />
                <HCell w={113} t="Test" />
              </div>
              {/* detail */}
              <div className="ml-[37px] mt-[6px] border border-[#b9bbc0] h-[45px] w-[1105px] flex flex-col">
                <div className="h-[21px] flex bg-gradient-to-b from-[#f7f7f8] to-[#ececef] border-b border-[#c6c6c9]">
                  <HC w={16} />
                  <HC w={67} center t={<Check />} />
                  <HC w={28} t="F..." />
                  <HC w={83} t="Installation" />
                  <HC w={84} t="Location" />
                  <HC w={84} t="Device Tag" />
                  <HC w={85} t="Quantity" />
                  <HC />
                </div>
                <div className="h-[22px] flex">
                  <div className="w-[16px] shrink-0 border-r border-[#c6c6c9] flex items-center justify-center">
                    <svg width="5" height="9"><path d="M0 0h5M0 9h5M2.5 0v9" stroke="#333" fill="none" /></svg>
                  </div>
                  <div className="w-[67px] shrink-0 border-r border-[#c6c6c9] flex items-center justify-center"><Check /></div>
                  <div className="w-[28px] shrink-0 border-r border-[#c6c6c9] flex items-center justify-center">
                    <S w={14} h={14}><rect x="1" y="1" width="6" height="8" fill="#3d70c0" /><path d="M4 0v2M3 9v4" stroke="#3d70c0" /><circle cx="9.5" cy="9.5" r="4" fill="#d9281e" /><rect x="7" y="9" width="5" height="1.2" fill="#fff" /></S>
                  </div>
                  <HCell w={83} t="GREEN RIDGE" />
                  <HCell w={84} t="PLAN" />
                  <div className="w-[84px] shrink-0 border border-dotted border-[#333] flex items-center px-[3px]">TRANS1</div>
                  <HCell w={85} t="1" right />
                </div>
              </div>
              <div className="mt-[5px] w-[804px] h-[2px] bg-[#e4e4e7]" />
            </div>
          </div>
        </div>
      </div>

      {/* Callouts over the picture */}
      <div className="absolute left-[676px] top-[28px] w-[87px] h-[28px] border-[3px] border-[#d8453a] shadow-[0_1px_3px_rgba(0,0,0,0.35)] pointer-events-none" />
      <div className="absolute left-[1022px] top-[59px] w-[81px] h-[77px] border-[3px] border-[#d8453a] shadow-[0_1px_3px_rgba(0,0,0,0.35)] pointer-events-none" />
      <div className="absolute left-[696px] top-[348px] w-[257px] h-[50px] border-[3px] border-[#d8453a] shadow-[0_1px_3px_rgba(0,0,0,0.35)] pointer-events-none" />
      <Badge cls="left-[760px] top-[24px]" n="1" />
      <Badge cls="left-[1099px] top-[76px]" n="2" />
      <Badge cls="left-[959px] top-[352px]" n="3" />
    </div>
  );
}

function HCell({ w, t, right }: { w: number; t?: string; right?: boolean }) {
  return (
    <div className={`shrink-0 h-full border-r border-b border-[#d0d0d3] flex items-center px-[4px] whitespace-nowrap ${right ? "justify-end" : ""}`} style={{ width: w }}>
      {t}
    </div>
  );
}
function Badge({ cls, n }: { cls: string; n: string }) {
  return (
    <div className={`absolute ${cls} w-[34px] h-[34px] rounded-full bg-[#e0483b] shadow-[0_2px_4px_rgba(0,0,0,0.4)] text-white text-[23px] tracking-normal flex items-center justify-center font-['Liberation_Sans',sans-serif]`}>
      {n}
    </div>
  );
}
